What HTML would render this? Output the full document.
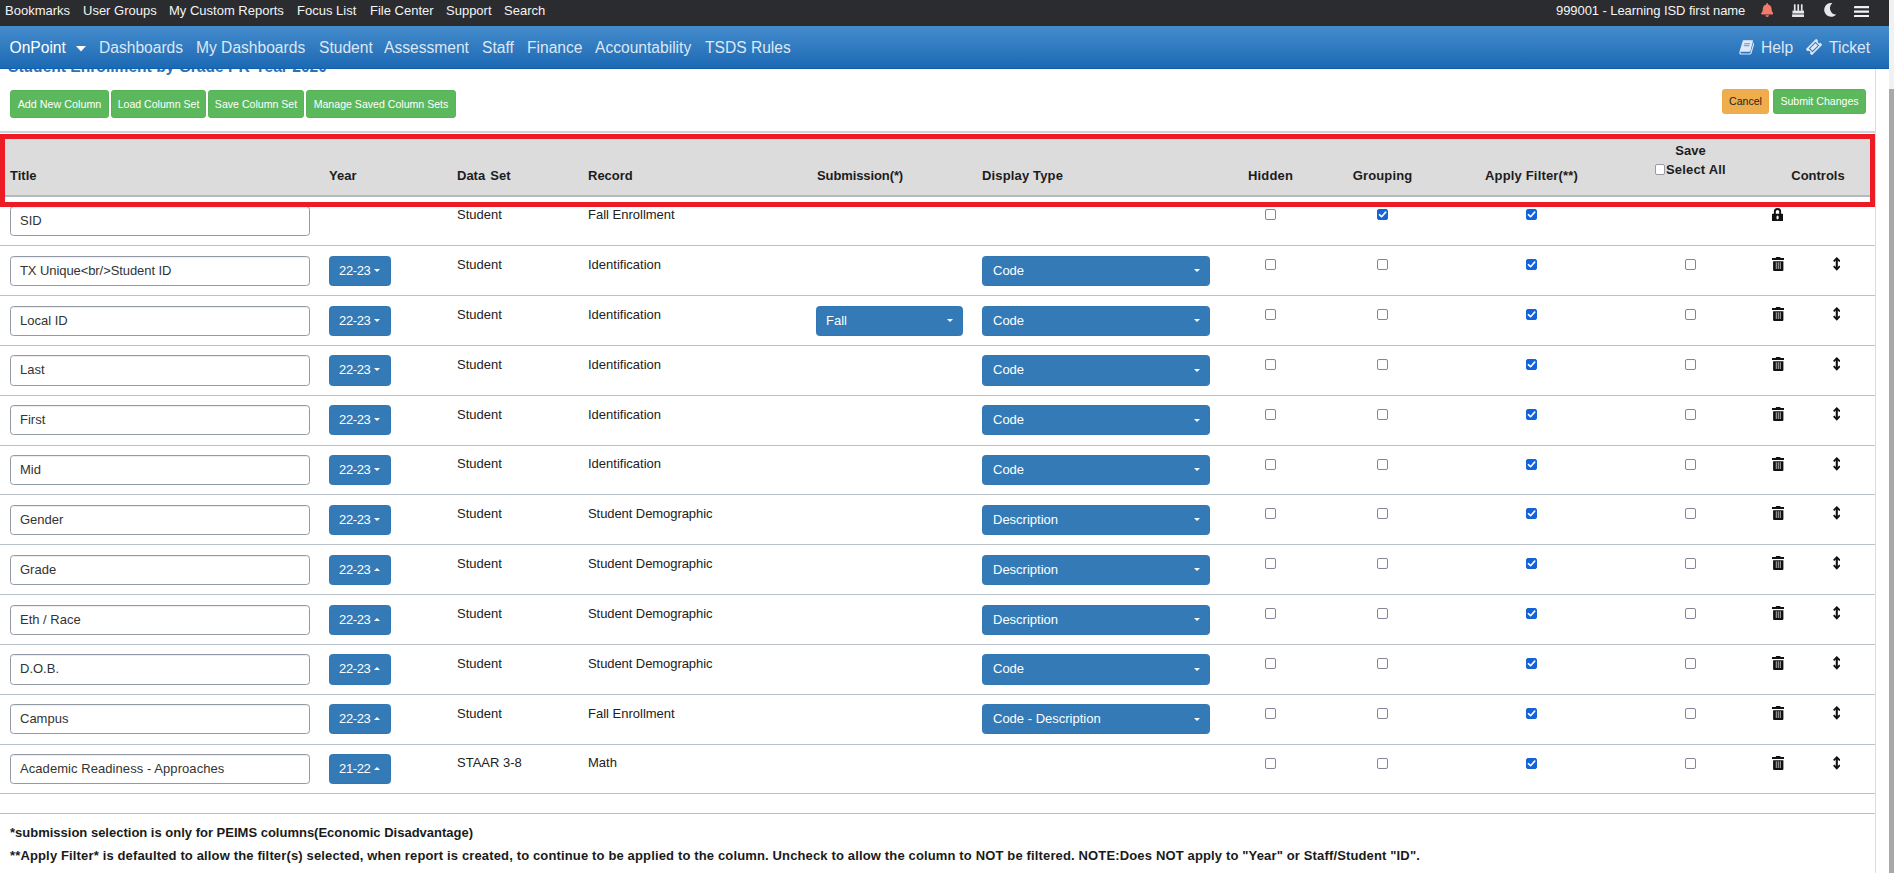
<!DOCTYPE html>
<html lang="en"><head><meta charset="utf-8"><title>OnPoint - Manage Columns</title>
<style>
html,body{margin:0;padding:0;}
body{width:1894px;height:873px;overflow:hidden;background:#fff;font-family:"Liberation Sans",sans-serif;font-size:13px;color:#222;}
#page{position:relative;width:1894px;height:873px;overflow:hidden;background:#fff;}
#page *{box-sizing:border-box;}
.abs{position:absolute;}
/* scrollbar */
#sbar{position:absolute;left:1889px;top:0;width:5px;height:873px;background:#f1f1f1;}
#sthumb{position:absolute;left:1889px;top:89px;width:5px;height:784px;background:#a8a8a8;}
/* top dark bar */
#topbar{position:absolute;left:0;top:0;width:1889px;height:26px;background:#2b2c30;color:#f4f4f4;font-size:13px;line-height:15px;white-space:nowrap;}
#topbar span{position:absolute;top:3px;}
/* blue nav */
#nav{position:absolute;left:0;top:26px;width:1889px;height:43px;background:linear-gradient(#458ccc 0%,#1c69b4 100%);border-bottom:1px solid #0f5fae;color:#fff;font-size:15.6px;line-height:18px;white-space:nowrap;}
#nav span{position:absolute;top:13px;}
#nav .lt{color:#dde7f4;}
/* heading */
#ttl{position:absolute;left:8px;top:57.8px;font-size:15.6px;line-height:18px;font-weight:bold;color:#2b72b9;white-space:nowrap;}
/* toolbar */
.tb{position:absolute;height:28px;border-radius:2.8px;background:#5cb85c;border:1px solid #56b356;color:#fff;font-size:10.58px;line-height:26px;text-align:center;white-space:nowrap;}
.tb.or{background:#f0ad4e;border-color:#efa945;color:#222;}
#hr1{position:absolute;left:0;top:131px;width:1875px;height:2px;background:#cfd3d7;}
#vline{position:absolute;left:1875px;top:69px;width:1px;height:804px;background:#dcdcdc;}
/* header */
#thead{position:absolute;left:0;top:134px;width:1875px;height:61px;background:#dcdcdc;}
#theadb{position:absolute;left:0;top:195px;width:1875px;height:2px;background:#b3bac2;}
#thead b{position:absolute;top:33px;line-height:18px;font-size:13px;color:#1c1c1c;white-space:nowrap;}
#thead b.c{transform:translateX(-50%);}
#redbox{position:absolute;left:0;top:134px;width:1875px;height:73px;border:5px solid #ed1c24;}
/* rows */
.row{position:absolute;left:0;width:1875px;height:49.83px;}
.ln{position:absolute;left:0;top:0;width:1875px;height:1px;background:#bac1c9;}
.inp{position:absolute;left:10px;top:10.48px;width:300px;height:30.18px;border:1px solid #939aa6;border-radius:3.5px;background:#fff;box-shadow:inset 0 1px 1px rgba(0,0,0,.075);padding-left:9px;line-height:27px;font-size:13px;color:#333;white-space:nowrap;overflow:hidden;}
.btn{position:absolute;top:10.48px;height:30.18px;border-radius:3.5px;background:#337ab7;border:1px solid #3177b3;color:#fff;font-size:13px;line-height:27px;white-space:nowrap;}
.btn.yr{left:329px;width:62px;padding-left:9px;}
.btn.yr span{letter-spacing:-0.35px;}
.btn.sel span{position:absolute;left:10px;top:0;}
.btn.sub{left:816px;width:147px;}
.btn.disp{left:982px;width:228px;}
.caret{display:inline-block;width:0;height:0;border-left:3.2px solid transparent;border-right:3.2px solid transparent;vertical-align:middle;margin-left:3px;position:relative;top:-1px;}
.caret.dn{border-top:3.4px solid #fff;}
.caret.up{border-bottom:3.4px solid #fff;}
.btn.sel .caret{position:absolute;right:9px;top:12.3px;margin:0;}
.btn.sub span{left:9px !important;}
.tx{position:absolute;top:10.83px;line-height:18px;font-size:13px;color:#222;white-space:nowrap;}
.tx.ds{left:457px;}
.tx.rec{left:588px;}
.cb{position:absolute;top:14px;width:11px;height:11px;border:1px solid #858593;border-radius:2px;background:#fff;display:block;}
.cb.on{background:#1464d8;border-color:#1464d8;}
.cb.on svg{position:absolute;left:-1px;top:-1px;width:11px;height:11px;}
.ic{position:absolute;}
.ic.lock{left:1771.9px;top:12.3px;width:11px;height:13.3px;}
.ic.trash{left:1771.7px;top:12px;width:12.3px;height:13.9px;}
.ic.arr{left:1832.9px;top:12.2px;width:7.6px;height:13.7px;}
/* footer */
#hr2{position:absolute;left:0;top:813px;width:1875px;height:1px;background:#b9c0c8;}
.note{position:absolute;left:10px;font-weight:bold;font-size:13px;line-height:18px;color:#1a1a1a;white-space:nowrap;}

</style></head>
<body>
<div id="page">
<div id="ttl">Student Enrollment by Grade PK-Year 2020</div>
<div id="topbar">
<span style="left:5px">Bookmarks</span><span style="left:83px">User Groups</span><span style="left:169px">My Custom Reports</span><span style="left:297px">Focus List</span><span style="left:370px">File Center</span><span style="left:446px">Support</span><span style="left:504px">Search</span>
<span style="left:1556px;letter-spacing:-0.07px">999001 - Learning ISD first name</span>
<svg class="abs" style="left:1761px;top:3px;width:12.4px;height:14px" viewBox="0 0 448 512"><path fill="#f47a6a" d="M224 512c35.3 0 64-28.7 64-64H160c0 35.300 28.700 64 64 64zm215.400-149.700c-19.300-20.800-55.500-52-55.500-154.300 0-77.700-54.500-139.900-128-155.200V32c0-17.700-14.300-32-32-32s-32 14.300-32 32v20.800C118.500 68.100 64 130.300 64 208c0 102.300-36.200 133.500-55.500 154.300-6 6.400-8.600 14.100-8.600 21.700.1 16.400 13 32 32.100 32h383.800c19.100 0 32-15.600 32.100-32 .1-7.600-2.600-15.300-8.600-21.700z"/></svg>
<svg class="abs" style="left:1792px;top:3.5px;width:12.4px;height:13.6px" viewBox="0 0 12.4 13.6"><g fill="#e6e8ec"><rect x="1.900" y="0.300" width="1.700" height="6.500"/><rect x="5.400" y="0.300" width="1.700" height="6.500"/><rect x="8.900" y="0.300" width="1.700" height="6.500"/><path d="M0.500 6.600h11.500v2.700H0.500z"/><path d="M0.100 10.500h12.300v3H0.100z"/><path d="M0.100 9.300h12.300v1.200H0.100z" opacity=".45"/></g></svg>
<svg class="abs" style="left:1823.6px;top:3px;width:12.6px;height:14px" viewBox="0 0 12.6 14"><path fill="#e6e8ec" d="M8.400 0.100 A6.900 6.900 0 1 0 12.200 11.550 A6.450 6.450 0 0 1 8.400 0.100z"/></svg>
<svg class="abs" style="left:1853.7px;top:5.5px;width:15.5px;height:11.3px" viewBox="0 0 15.5 11.3"><g fill="#f0f1f3"><rect x="0" y="0" width="15.5" height="2.2" rx=".5"/><rect x="0" y="4.45" width="15.5" height="2.2" rx=".5"/><rect x="0" y="9.1" width="15.5" height="2.2" rx=".5"/></g></svg>
</div>
<div id="nav">
<span style="left:9.5px">OnPoint</span>
<svg class="abs" style="left:76px;top:20px;width:10px;height:6px" viewBox="0 0 10 6"><path d="M0 0H10L5 5.6z" fill="#fff"/></svg>
<span class="lt" style="left:99px">Dashboards</span><span class="lt" style="left:196px">My Dashboards</span><span class="lt" style="left:319px">Student</span><span class="lt" style="left:384px">Assessment</span><span class="lt" style="left:482px">Staff</span><span class="lt" style="left:527px">Finance</span><span class="lt" style="left:595px">Accountability</span><span class="lt" style="left:705px">TSDS Rules</span>
<svg class="abs" style="left:1738.85px;top:13.8px;width:15.4px;height:14.8px" viewBox="0 0 15.4 14.8"><path d="M4.500 0.800H13.400L10.700 11.100H1.300z" fill="#dfe9f5" stroke="#dfe9f5" stroke-width="1.300" stroke-linejoin="round"/><path d="M5.200 3.750H10.900M4.800 5.700H10.300" fill="none" stroke="#3580c6" stroke-width=".8"/><path d="M1.100 11.700Q0.300 13.900 2.300 14H10.700Q11.700 14 12 13L14.800 3.300" fill="none" stroke="#dfe9f5" stroke-width="1.150" stroke-linecap="round" stroke-linejoin="round"/></svg>
<span class="lt" style="left:1761px">Help</span>
<svg class="abs" style="left:1805.8px;top:13.2px;width:16px;height:16px" viewBox="0 0 16 16"><g transform="rotate(-45 8 8)" fill="#dfe9f5"><path fill-rule="evenodd" d="M0.600 3.700H15.400V6.500A1.500 1.500 0 0 0 15.400 9.500V12.300H0.600V9.500A1.500 1.500 0 0 0 0.600 6.500z M3.300 5.300V10.700H12.700V5.300z"/><rect x="4.300" y="6.300" width="7.400" height="3.400"/></g></svg>
<span class="lt" style="left:1829px">Ticket</span>
</div>
<div class="tb" style="left:10px;top:90px;width:99px;font-size:10.75px">Add New Column</div>
<div class="tb" style="left:111px;top:90px;width:95px">Load Column Set</div>
<div class="tb" style="left:208px;top:90px;width:96px">Save Column Set</div>
<div class="tb" style="left:306px;top:90px;width:150px">Manage Saved Column Sets</div>
<div class="tb or" style="left:1722px;top:89px;width:47px;height:25px;line-height:23px">Cancel</div>
<div class="tb" style="left:1773px;top:89px;width:93px;height:25px;line-height:23px">Submit Changes</div>
<div id="hr1"></div>
<div id="vline"></div>
<div id="thead">
<b style="left:10px">Title</b><b style="left:329px">Year</b><b style="left:457px;word-spacing:1.5px">Data Set</b><b style="left:588px">Record</b><b style="left:817px;letter-spacing:-0.1px">Submission(*)</b><b style="left:982px;letter-spacing:.15px">Display Type</b>
<b class="c" style="left:1270.500px;letter-spacing:.15px">Hidden</b><b class="c" style="left:1382.500px;letter-spacing:.15px">Grouping</b><b class="c" style="left:1531.500px;letter-spacing:.17px">Apply Filter(**)</b>
<b class="c" style="left:1690.500px;top:8px">Save</b>
<i class="cb" style="left:1655px;top:30.4px;width:9.6px;height:10.6px;border-color:#9a9aa8"></i><b style="left:1666px;top:27px;letter-spacing:0.18px">Select All</b>
<b class="c" style="left:1818px">Controls</b>
</div>
<div id="theadb"></div>
<div id="rows">
<div class="row" style="top:195.430px">
 <div class="inp"><span>SID</span></div>
 <div class="tx ds">Student</div><div class="tx rec">Fall Enrollment</div>
 <i class="cb" style="top:13.570px;left:1264.8px"></i><i class="cb on" style="top:13.570px;left:1376.8px"><svg viewBox="0 0 12 12"><path d="M2.6 6.2 L5 8.5 L9.5 3.4" fill="none" stroke="#fff" stroke-width="1.7" stroke-linecap="round" stroke-linejoin="round"/></svg></i><i class="cb on" style="top:13.570px;left:1525.6px"><svg viewBox="0 0 12 12"><path d="M2.6 6.2 L5 8.5 L9.5 3.4" fill="none" stroke="#fff" stroke-width="1.7" stroke-linecap="round" stroke-linejoin="round"/></svg></i><svg class="ic lock" style="top:12.570px" viewBox="0 0 11 13.3"><path fill="#111" d="M0.600 5.650H10.400a.6.6 0 0 1 .6.600V12.700a.6.6 0 0 1-.6.600H0.600a.6.6 0 0 1-.6-.600V6.250a.6.6 0 0 1 .6-.600z M1.900 5.800V3.600A3.600 3.600 0 0 1 9.100 3.600V5.800H7.200V3.600A1.700 1.700 0 0 0 3.800 3.600V5.800z"/><ellipse cx="5.550" cy="9.500" rx="1.100" ry="2" fill="#fff"/></svg>
</div>
<div class="row" style="top:245.262px">
 <div class="ln"></div>
 <div class="inp"><span style="letter-spacing:-0.08px">TX Unique&lt;br/&gt;Student ID</span></div>
 <div class="btn yr"><span>22-23</span><i class="caret dn"></i></div>
 <div class="tx ds">Student</div><div class="tx rec">Identification</div>
 <div class="btn sel disp"><span>Code</span><i class="caret dn"></i></div>
 <i class="cb" style="top:13.738px;left:1264.8px"></i><i class="cb" style="top:13.738px;left:1376.8px"></i><i class="cb on" style="top:13.738px;left:1525.6px"><svg viewBox="0 0 12 12"><path d="M2.6 6.2 L5 8.5 L9.5 3.4" fill="none" stroke="#fff" stroke-width="1.7" stroke-linecap="round" stroke-linejoin="round"/></svg></i><i class="cb" style="top:13.738px;left:1685.4px"></i><svg class="ic trash" style="top:11.638px;" viewBox="0 0 12.3 13.9"><path fill="#111" d="M4.300 0H8a.5.5 0 0 1 .5.500V1H12.300V3.100H0V1H3.800V.5a.5.5 0 0 1 .5-.500z M1.100 4.200H11.400V12.900a1 1 0 0 1-1 1H2.100a1 1 0 0 1-1-1z"/><path fill="#c4c4c4" d="M3.800 5.300h0.900v6.700h-0.900z M5.800 5.300h0.900v6.700h-0.900z M7.800 5.300h0.900v6.700h-0.900z"/></svg><svg class="ic arr" style="top:11.938px;" viewBox="0 0 7.6 13.7"><g fill="none" stroke="#111" stroke-linejoin="miter"><path stroke-width="2.1" d="M3.800 1.600V12.100"/><path stroke-width="1.800" d="M0.700 4.500L3.800 1.300L6.900 4.500M0.700 9.200L3.800 12.400L6.900 9.200"/></g></svg>
</div>
<div class="row" style="top:295.093px">
 <div class="ln"></div>
 <div class="inp"><span>Local ID</span></div>
 <div class="btn yr"><span>22-23</span><i class="caret dn"></i></div>
 <div class="tx ds">Student</div><div class="tx rec">Identification</div>
 <div class="btn sel sub"><span>Fall</span><i class="caret dn"></i></div>
 <div class="btn sel disp"><span>Code</span><i class="caret dn"></i></div>
 <i class="cb" style="top:13.907px;left:1264.8px"></i><i class="cb" style="top:13.907px;left:1376.8px"></i><i class="cb on" style="top:13.907px;left:1525.6px"><svg viewBox="0 0 12 12"><path d="M2.6 6.2 L5 8.5 L9.5 3.4" fill="none" stroke="#fff" stroke-width="1.7" stroke-linecap="round" stroke-linejoin="round"/></svg></i><i class="cb" style="top:13.907px;left:1685.4px"></i><svg class="ic trash" style="top:11.807px;" viewBox="0 0 12.3 13.9"><path fill="#111" d="M4.300 0H8a.5.5 0 0 1 .5.500V1H12.300V3.100H0V1H3.800V.5a.5.5 0 0 1 .5-.500z M1.100 4.200H11.400V12.900a1 1 0 0 1-1 1H2.100a1 1 0 0 1-1-1z"/><path fill="#c4c4c4" d="M3.800 5.300h0.900v6.700h-0.900z M5.800 5.300h0.900v6.700h-0.900z M7.800 5.300h0.900v6.700h-0.900z"/></svg><svg class="ic arr" style="top:12.107px;" viewBox="0 0 7.6 13.7"><g fill="none" stroke="#111" stroke-linejoin="miter"><path stroke-width="2.1" d="M3.800 1.600V12.100"/><path stroke-width="1.800" d="M0.700 4.500L3.800 1.300L6.900 4.500M0.700 9.200L3.800 12.400L6.900 9.200"/></g></svg>
</div>
<div class="row" style="top:344.924px">
 <div class="ln"></div>
 <div class="inp"><span>Last</span></div>
 <div class="btn yr"><span>22-23</span><i class="caret dn"></i></div>
 <div class="tx ds">Student</div><div class="tx rec">Identification</div>
 <div class="btn sel disp"><span>Code</span><i class="caret dn"></i></div>
 <i class="cb" style="top:14.076px;left:1264.8px"></i><i class="cb" style="top:14.076px;left:1376.8px"></i><i class="cb on" style="top:14.076px;left:1525.6px"><svg viewBox="0 0 12 12"><path d="M2.6 6.2 L5 8.5 L9.5 3.4" fill="none" stroke="#fff" stroke-width="1.7" stroke-linecap="round" stroke-linejoin="round"/></svg></i><i class="cb" style="top:14.076px;left:1685.4px"></i><svg class="ic trash" style="top:11.976px;" viewBox="0 0 12.3 13.9"><path fill="#111" d="M4.300 0H8a.5.5 0 0 1 .5.500V1H12.300V3.100H0V1H3.800V.5a.5.5 0 0 1 .5-.500z M1.100 4.200H11.400V12.900a1 1 0 0 1-1 1H2.100a1 1 0 0 1-1-1z"/><path fill="#c4c4c4" d="M3.800 5.300h0.900v6.700h-0.900z M5.800 5.300h0.900v6.700h-0.900z M7.800 5.300h0.900v6.700h-0.900z"/></svg><svg class="ic arr" style="top:12.276px;" viewBox="0 0 7.6 13.7"><g fill="none" stroke="#111" stroke-linejoin="miter"><path stroke-width="2.1" d="M3.800 1.600V12.100"/><path stroke-width="1.800" d="M0.700 4.500L3.800 1.300L6.900 4.500M0.700 9.200L3.800 12.400L6.900 9.200"/></g></svg>
</div>
<div class="row" style="top:394.756px">
 <div class="ln"></div>
 <div class="inp"><span>First</span></div>
 <div class="btn yr"><span>22-23</span><i class="caret dn"></i></div>
 <div class="tx ds">Student</div><div class="tx rec">Identification</div>
 <div class="btn sel disp"><span>Code</span><i class="caret dn"></i></div>
 <i class="cb" style="top:14.244px;left:1264.8px"></i><i class="cb" style="top:14.244px;left:1376.8px"></i><i class="cb on" style="top:14.244px;left:1525.6px"><svg viewBox="0 0 12 12"><path d="M2.6 6.2 L5 8.5 L9.5 3.4" fill="none" stroke="#fff" stroke-width="1.7" stroke-linecap="round" stroke-linejoin="round"/></svg></i><i class="cb" style="top:14.244px;left:1685.4px"></i><svg class="ic trash" style="top:12.144px;" viewBox="0 0 12.3 13.9"><path fill="#111" d="M4.300 0H8a.5.5 0 0 1 .5.500V1H12.300V3.100H0V1H3.800V.5a.5.5 0 0 1 .5-.500z M1.100 4.200H11.400V12.900a1 1 0 0 1-1 1H2.100a1 1 0 0 1-1-1z"/><path fill="#c4c4c4" d="M3.800 5.300h0.900v6.700h-0.900z M5.800 5.300h0.900v6.700h-0.900z M7.800 5.300h0.900v6.700h-0.900z"/></svg><svg class="ic arr" style="top:12.444px;" viewBox="0 0 7.6 13.7"><g fill="none" stroke="#111" stroke-linejoin="miter"><path stroke-width="2.1" d="M3.800 1.600V12.100"/><path stroke-width="1.800" d="M0.700 4.500L3.800 1.300L6.900 4.500M0.700 9.200L3.800 12.400L6.900 9.200"/></g></svg>
</div>
<div class="row" style="top:444.587px">
 <div class="ln"></div>
 <div class="inp"><span>Mid</span></div>
 <div class="btn yr"><span>22-23</span><i class="caret dn"></i></div>
 <div class="tx ds">Student</div><div class="tx rec">Identification</div>
 <div class="btn sel disp"><span>Code</span><i class="caret dn"></i></div>
 <i class="cb" style="top:14.413px;left:1264.8px"></i><i class="cb" style="top:14.413px;left:1376.8px"></i><i class="cb on" style="top:14.413px;left:1525.6px"><svg viewBox="0 0 12 12"><path d="M2.6 6.2 L5 8.5 L9.5 3.4" fill="none" stroke="#fff" stroke-width="1.7" stroke-linecap="round" stroke-linejoin="round"/></svg></i><i class="cb" style="top:14.413px;left:1685.4px"></i><svg class="ic trash" style="top:12.312px;" viewBox="0 0 12.3 13.9"><path fill="#111" d="M4.300 0H8a.5.5 0 0 1 .5.500V1H12.300V3.100H0V1H3.800V.5a.5.5 0 0 1 .5-.500z M1.100 4.200H11.400V12.900a1 1 0 0 1-1 1H2.100a1 1 0 0 1-1-1z"/><path fill="#c4c4c4" d="M3.800 5.300h0.900v6.700h-0.900z M5.800 5.300h0.900v6.700h-0.900z M7.800 5.300h0.900v6.700h-0.900z"/></svg><svg class="ic arr" style="top:12.613px;" viewBox="0 0 7.6 13.7"><g fill="none" stroke="#111" stroke-linejoin="miter"><path stroke-width="2.1" d="M3.800 1.600V12.100"/><path stroke-width="1.800" d="M0.700 4.500L3.800 1.300L6.900 4.500M0.700 9.200L3.800 12.400L6.900 9.200"/></g></svg>
</div>
<div class="row" style="top:494.419px">
 <div class="ln"></div>
 <div class="inp"><span>Gender</span></div>
 <div class="btn yr"><span>22-23</span><i class="caret dn"></i></div>
 <div class="tx ds">Student</div><div class="tx rec" style="letter-spacing:-0.07px">Student Demographic</div>
 <div class="btn sel disp"><span>Description</span><i class="caret dn"></i></div>
 <i class="cb" style="top:13.581px;left:1264.8px"></i><i class="cb" style="top:13.581px;left:1376.8px"></i><i class="cb on" style="top:13.581px;left:1525.6px"><svg viewBox="0 0 12 12"><path d="M2.6 6.2 L5 8.5 L9.5 3.4" fill="none" stroke="#fff" stroke-width="1.7" stroke-linecap="round" stroke-linejoin="round"/></svg></i><i class="cb" style="top:13.581px;left:1685.4px"></i><svg class="ic trash" style="top:11.481px;" viewBox="0 0 12.3 13.9"><path fill="#111" d="M4.300 0H8a.5.5 0 0 1 .5.500V1H12.300V3.100H0V1H3.800V.5a.5.5 0 0 1 .5-.500z M1.100 4.200H11.400V12.900a1 1 0 0 1-1 1H2.100a1 1 0 0 1-1-1z"/><path fill="#c4c4c4" d="M3.800 5.300h0.900v6.700h-0.900z M5.800 5.300h0.900v6.700h-0.900z M7.800 5.300h0.900v6.700h-0.900z"/></svg><svg class="ic arr" style="top:11.781px;" viewBox="0 0 7.6 13.7"><g fill="none" stroke="#111" stroke-linejoin="miter"><path stroke-width="2.1" d="M3.800 1.600V12.100"/><path stroke-width="1.800" d="M0.700 4.500L3.800 1.300L6.900 4.500M0.700 9.200L3.800 12.400L6.900 9.200"/></g></svg>
</div>
<div class="row" style="top:544.250px">
 <div class="ln"></div>
 <div class="inp"><span>Grade</span></div>
 <div class="btn yr"><span>22-23</span><i class="caret up"></i></div>
 <div class="tx ds">Student</div><div class="tx rec" style="letter-spacing:-0.07px">Student Demographic</div>
 <div class="btn sel disp"><span>Description</span><i class="caret dn"></i></div>
 <i class="cb" style="top:13.750px;left:1264.8px"></i><i class="cb" style="top:13.750px;left:1376.8px"></i><i class="cb on" style="top:13.750px;left:1525.6px"><svg viewBox="0 0 12 12"><path d="M2.6 6.2 L5 8.5 L9.5 3.4" fill="none" stroke="#fff" stroke-width="1.7" stroke-linecap="round" stroke-linejoin="round"/></svg></i><i class="cb" style="top:13.750px;left:1685.4px"></i><svg class="ic trash" style="top:11.649px;" viewBox="0 0 12.3 13.9"><path fill="#111" d="M4.300 0H8a.5.5 0 0 1 .5.500V1H12.300V3.100H0V1H3.800V.5a.5.5 0 0 1 .5-.500z M1.100 4.200H11.400V12.900a1 1 0 0 1-1 1H2.100a1 1 0 0 1-1-1z"/><path fill="#c4c4c4" d="M3.800 5.300h0.900v6.700h-0.900z M5.800 5.300h0.900v6.700h-0.900z M7.800 5.300h0.900v6.700h-0.900z"/></svg><svg class="ic arr" style="top:11.950px;" viewBox="0 0 7.6 13.7"><g fill="none" stroke="#111" stroke-linejoin="miter"><path stroke-width="2.1" d="M3.800 1.600V12.100"/><path stroke-width="1.800" d="M0.700 4.500L3.800 1.300L6.900 4.500M0.700 9.200L3.800 12.400L6.900 9.200"/></g></svg>
</div>
<div class="row" style="top:594.082px">
 <div class="ln"></div>
 <div class="inp"><span>Eth / Race</span></div>
 <div class="btn yr"><span>22-23</span><i class="caret up"></i></div>
 <div class="tx ds">Student</div><div class="tx rec" style="letter-spacing:-0.07px">Student Demographic</div>
 <div class="btn sel disp"><span>Description</span><i class="caret dn"></i></div>
 <i class="cb" style="top:13.918px;left:1264.8px"></i><i class="cb" style="top:13.918px;left:1376.8px"></i><i class="cb on" style="top:13.918px;left:1525.6px"><svg viewBox="0 0 12 12"><path d="M2.6 6.2 L5 8.5 L9.5 3.4" fill="none" stroke="#fff" stroke-width="1.7" stroke-linecap="round" stroke-linejoin="round"/></svg></i><i class="cb" style="top:13.918px;left:1685.4px"></i><svg class="ic trash" style="top:11.818px;" viewBox="0 0 12.3 13.9"><path fill="#111" d="M4.300 0H8a.5.5 0 0 1 .5.500V1H12.300V3.100H0V1H3.800V.5a.5.5 0 0 1 .5-.500z M1.100 4.200H11.400V12.900a1 1 0 0 1-1 1H2.100a1 1 0 0 1-1-1z"/><path fill="#c4c4c4" d="M3.800 5.300h0.900v6.700h-0.900z M5.800 5.300h0.900v6.700h-0.900z M7.800 5.300h0.900v6.700h-0.900z"/></svg><svg class="ic arr" style="top:12.118px;" viewBox="0 0 7.6 13.7"><g fill="none" stroke="#111" stroke-linejoin="miter"><path stroke-width="2.1" d="M3.800 1.600V12.100"/><path stroke-width="1.800" d="M0.700 4.500L3.800 1.300L6.900 4.500M0.700 9.200L3.800 12.400L6.900 9.200"/></g></svg>
</div>
<div class="row" style="top:643.913px">
 <div class="ln"></div>
 <div class="inp"><span>D.O.B.</span></div>
 <div class="btn yr"><span>22-23</span><i class="caret up"></i></div>
 <div class="tx ds">Student</div><div class="tx rec" style="letter-spacing:-0.07px">Student Demographic</div>
 <div class="btn sel disp"><span>Code</span><i class="caret dn"></i></div>
 <i class="cb" style="top:14.087px;left:1264.8px"></i><i class="cb" style="top:14.087px;left:1376.8px"></i><i class="cb on" style="top:14.087px;left:1525.6px"><svg viewBox="0 0 12 12"><path d="M2.6 6.2 L5 8.5 L9.5 3.4" fill="none" stroke="#fff" stroke-width="1.7" stroke-linecap="round" stroke-linejoin="round"/></svg></i><i class="cb" style="top:14.087px;left:1685.4px"></i><svg class="ic trash" style="top:11.986px;" viewBox="0 0 12.3 13.9"><path fill="#111" d="M4.300 0H8a.5.5 0 0 1 .5.500V1H12.300V3.100H0V1H3.800V.5a.5.5 0 0 1 .5-.500z M1.100 4.200H11.400V12.900a1 1 0 0 1-1 1H2.100a1 1 0 0 1-1-1z"/><path fill="#c4c4c4" d="M3.800 5.300h0.900v6.700h-0.900z M5.800 5.300h0.900v6.700h-0.900z M7.800 5.300h0.900v6.700h-0.900z"/></svg><svg class="ic arr" style="top:12.287px;" viewBox="0 0 7.6 13.7"><g fill="none" stroke="#111" stroke-linejoin="miter"><path stroke-width="2.1" d="M3.800 1.600V12.100"/><path stroke-width="1.800" d="M0.700 4.500L3.800 1.300L6.900 4.500M0.700 9.200L3.800 12.400L6.900 9.200"/></g></svg>
</div>
<div class="row" style="top:693.745px">
 <div class="ln"></div>
 <div class="inp"><span>Campus</span></div>
 <div class="btn yr"><span>22-23</span><i class="caret up"></i></div>
 <div class="tx ds">Student</div><div class="tx rec">Fall Enrollment</div>
 <div class="btn sel disp"><span>Code - Description</span><i class="caret dn"></i></div>
 <i class="cb" style="top:14.255px;left:1264.8px"></i><i class="cb" style="top:14.255px;left:1376.8px"></i><i class="cb on" style="top:14.255px;left:1525.6px"><svg viewBox="0 0 12 12"><path d="M2.6 6.2 L5 8.5 L9.5 3.4" fill="none" stroke="#fff" stroke-width="1.7" stroke-linecap="round" stroke-linejoin="round"/></svg></i><i class="cb" style="top:14.255px;left:1685.4px"></i><svg class="ic trash" style="top:12.155px;" viewBox="0 0 12.3 13.9"><path fill="#111" d="M4.300 0H8a.5.5 0 0 1 .5.500V1H12.300V3.100H0V1H3.800V.5a.5.5 0 0 1 .5-.500z M1.100 4.200H11.400V12.900a1 1 0 0 1-1 1H2.100a1 1 0 0 1-1-1z"/><path fill="#c4c4c4" d="M3.800 5.300h0.900v6.700h-0.900z M5.800 5.300h0.900v6.700h-0.900z M7.800 5.300h0.900v6.700h-0.900z"/></svg><svg class="ic arr" style="top:12.455px;" viewBox="0 0 7.6 13.7"><g fill="none" stroke="#111" stroke-linejoin="miter"><path stroke-width="2.1" d="M3.800 1.600V12.100"/><path stroke-width="1.800" d="M0.700 4.500L3.800 1.300L6.900 4.500M0.700 9.200L3.800 12.400L6.900 9.200"/></g></svg>
</div>
<div class="row" style="top:743.576px">
 <div class="ln"></div>
 <div class="inp"><span style="letter-spacing:0.065px">Academic Readiness - Approaches</span></div>
 <div class="btn yr"><span>21-22</span><i class="caret up"></i></div>
 <div class="tx ds">STAAR 3-8</div><div class="tx rec">Math</div>
 <i class="cb" style="top:14.424px;left:1264.8px"></i><i class="cb" style="top:14.424px;left:1376.8px"></i><i class="cb on" style="top:14.424px;left:1525.6px"><svg viewBox="0 0 12 12"><path d="M2.6 6.2 L5 8.5 L9.5 3.4" fill="none" stroke="#fff" stroke-width="1.7" stroke-linecap="round" stroke-linejoin="round"/></svg></i><i class="cb" style="top:14.424px;left:1685.4px"></i><svg class="ic trash" style="top:12.324px;" viewBox="0 0 12.3 13.9"><path fill="#111" d="M4.300 0H8a.5.5 0 0 1 .5.500V1H12.300V3.100H0V1H3.800V.5a.5.5 0 0 1 .5-.500z M1.100 4.200H11.400V12.900a1 1 0 0 1-1 1H2.100a1 1 0 0 1-1-1z"/><path fill="#c4c4c4" d="M3.800 5.300h0.900v6.700h-0.900z M5.800 5.300h0.900v6.700h-0.900z M7.800 5.300h0.900v6.700h-0.900z"/></svg><svg class="ic arr" style="top:12.624px;" viewBox="0 0 7.6 13.7"><g fill="none" stroke="#111" stroke-linejoin="miter"><path stroke-width="2.1" d="M3.800 1.600V12.100"/><path stroke-width="1.800" d="M0.700 4.500L3.800 1.300L6.900 4.500M0.700 9.200L3.800 12.400L6.900 9.200"/></g></svg>
</div>
<div class="row" style="top:793.408px;height:1px"><div class="ln"></div></div>
</div>
<div id="redbox"></div>
<div id="hr2"></div>
<div class="note" style="top:824px">*submission selection is only for PEIMS columns(Economic Disadvantage)</div>
<div class="note" style="top:847px;letter-spacing:0.146px">**Apply Filter* is defaulted to allow the filter(s) selected, when report is created, to continue to be applied to the column. Uncheck to allow the column to NOT be filtered. NOTE:Does NOT apply to "Year" or Staff/Student "ID".</div>
<div id="sbar"></div><div id="sthumb"></div>
</div>
</body></html>
